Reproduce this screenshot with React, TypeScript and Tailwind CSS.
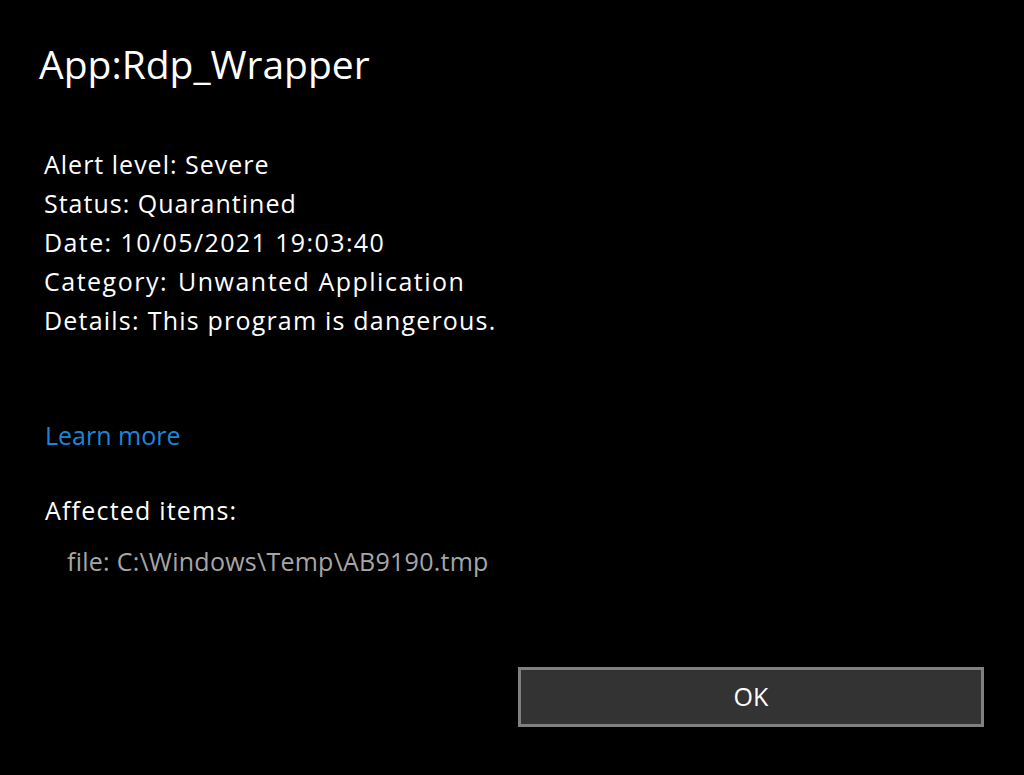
import React from "react";

export default function App() {
  const font = { fontFamily: '"Open Sans", "Noto Sans", sans-serif' };
  return (
    <div className="w-[1024px] h-[775px] bg-black text-white flex flex-col overflow-hidden" style={font}>
      <div className="pl-[39px] pt-[40px] text-[39px] leading-[48px]">App:Rdp_Wrapper</div>
      <div className="pl-[44px] pt-[57px] text-[25px] leading-[39px] flex flex-col tracking-[1px]">
        <div>Alert level: Severe</div>
        <div>Status: Quarantined</div>
        <div className="tracking-[1.4px]"><span className="mr-[8px]">Date:</span>10/05/2021 19:03:40</div>
        <div className="tracking-[1.5px]"><span className="mr-[10px]">Category:</span>Unwanted Application</div>
        <div className="tracking-[1.2px]"><span className="mr-[8px]">Details:</span>This program is dangerous.</div>
      </div>
      <div className="pl-[45px] pt-[76px] text-[25px] leading-[39px] text-[#1b86d8]">Learn more</div>
      <div className="pl-[45px] pt-[36px] text-[25px] leading-[39px] tracking-[1.2px]">Affected items:</div>
      <div className="pl-[67px] pt-[12px] text-[25px] leading-[39px] text-[#a6a6a6] tracking-[0.25px]">file: C:\Windows\Temp\AB9190.tmp</div>
      <div className="flex justify-end pr-[40px] pt-[86px]">
        <button className="w-[466px] h-[60px] bg-[#333333] border-[3px] border-[#808080] text-[25px] text-white">OK</button>
      </div>
    </div>
  );
}
